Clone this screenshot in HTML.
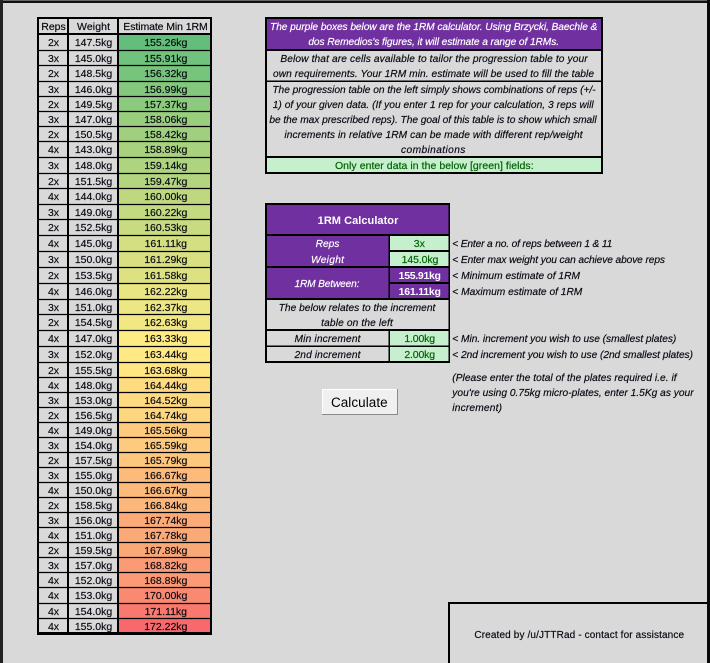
<!DOCTYPE html>
<html><head><meta charset="utf-8"><title>1RM Calculator</title>
<style>
html,body{margin:0;padding:0;background:#d9d9d9;width:710px;height:663px;overflow:hidden}
svg{display:block;position:absolute;left:0;top:0}
text{font-family:"Liberation Sans",sans-serif;font-size:10.5px;fill:#0a0a14;stroke:#0a0a14;stroke-width:.18px;text-anchor:middle;white-space:pre}
.i{font-style:italic;font-size:10.2px}
.s{text-anchor:start}
.w{fill:#fff;stroke:#fff}
.b{font-weight:bold;stroke-width:0}
.g{fill:#006100;stroke:#006100}
</style></head><body>
<svg width="710" height="663" viewBox="0 0 710 663" xmlns="http://www.w3.org/2000/svg">
<rect width="710" height="663" fill="#d9d9d9"/>
<rect x="0" y="0" width="710" height="3" fill="#111"/><rect x="0" y="0" width="710" height="1" fill="#666"/>
<rect x="0" y="0" width="3" height="663" fill="#222"/>
<rect x="707" y="0" width="3" height="663" fill="#0a0a0a"/>

<!-- Progression table -->
<rect x="37" y="17" width="175" height="618" fill="#000"/>
<rect x="39" y="19" width="28" height="14" fill="#d9d9d9"/><rect x="69" y="19" width="48" height="14" fill="#d9d9d9"/><rect x="119" y="19" width="91" height="14" fill="#d9d9d9"/>
<rect x="39" y="35" width="28" height="597" fill="#d9d9d9"/><rect x="69" y="35" width="48" height="597" fill="#d9d9d9"/>
<g>
<rect x="119" y="35" width="91" height="16" fill="#63BE7B"/><rect x="119" y="51" width="91" height="15" fill="#70C27C"/><rect x="119" y="66" width="91" height="16" fill="#77C47C"/><rect x="119" y="82" width="91" height="15" fill="#84C87D"/><rect x="119" y="97" width="91" height="15" fill="#8CCA7D"/><rect x="119" y="112" width="91" height="15" fill="#99CE7E"/><rect x="119" y="127" width="91" height="15" fill="#A0D07F"/><rect x="119" y="142" width="91" height="16" fill="#A9D27F"/><rect x="119" y="158" width="91" height="16" fill="#AED47F"/><rect x="119" y="174" width="91" height="15" fill="#B4D580"/><rect x="119" y="189" width="91" height="16" fill="#BFD880"/><rect x="119" y="205" width="91" height="15" fill="#C3DA81"/><rect x="119" y="220" width="91" height="16" fill="#C9DB81"/><rect x="119" y="236" width="91" height="16" fill="#D4DF82"/><rect x="119" y="252" width="91" height="16" fill="#D8E082"/><rect x="119" y="268" width="91" height="16" fill="#DDE182"/><rect x="119" y="284" width="91" height="16" fill="#EAE583"/><rect x="119" y="300" width="91" height="15" fill="#ECE683"/><rect x="119" y="315" width="91" height="16" fill="#F1E783"/><rect x="119" y="331" width="91" height="16" fill="#FFEB84"/><rect x="119" y="347" width="91" height="16" fill="#FFE984"/><rect x="119" y="363" width="91" height="15" fill="#FFE683"/><rect x="119" y="378" width="91" height="15" fill="#FEDB81"/><rect x="119" y="393" width="91" height="15" fill="#FEDA81"/><rect x="119" y="408" width="91" height="15" fill="#FED680"/><rect x="119" y="423" width="91" height="15" fill="#FDCA7E"/><rect x="119" y="438" width="91" height="15" fill="#FDCA7E"/><rect x="119" y="453" width="91" height="15" fill="#FDC77D"/><rect x="119" y="468" width="91" height="15" fill="#FCBA7B"/><rect x="119" y="483" width="91" height="15" fill="#FCBA7B"/><rect x="119" y="498" width="91" height="15" fill="#FCB87A"/><rect x="119" y="513" width="91" height="15" fill="#FCAB78"/><rect x="119" y="528" width="91" height="15" fill="#FBAA77"/><rect x="119" y="543" width="91" height="15" fill="#FBA877"/><rect x="119" y="558" width="91" height="15" fill="#FB9B75"/><rect x="119" y="573" width="91" height="15" fill="#FB9A74"/><rect x="119" y="588" width="91" height="16" fill="#FA8971"/><rect x="119" y="604" width="91" height="15" fill="#F9796E"/><rect x="119" y="619" width="91" height="13" fill="#F8696B"/>
</g>
<path stroke="#000" stroke-width="1.2" fill="none" d="M39 50.5H210M39 65.5H210M39 81.5H210M39 96.5H210M39 111.5H210M39 126.5H210M39 141.5H210M39 157.5H210M39 173.5H210M39 188.5H210M39 204.5H210M39 219.5H210M39 235.5H210M39 251.5H210M39 267.5H210M39 283.5H210M39 299.5H210M39 314.5H210M39 330.5H210M39 346.5H210M39 362.5H210M39 377.5H210M39 392.5H210M39 407.5H210M39 422.5H210M39 437.5H210M39 452.5H210M39 467.5H210M39 482.5H210M39 497.5H210M39 512.5H210M39 527.5H210M39 542.5H210M39 557.5H210M39 572.5H210M39 587.5H210M39 603.5H210M39 618.5H210"/>
<text x="53.5" y="30">Reps</text><text x="93.5" y="30" textLength="33">Weight</text><text x="165.5" y="30" textLength="84.4">Estimate Min 1RM</text>
<text x="53.5" y="46">2x</text><text x="93.5" y="46">147.5kg</text><text x="165.8" y="46">155.26kg</text>
<text x="53.5" y="62">3x</text><text x="93.5" y="62">145.0kg</text><text x="165.8" y="62">155.91kg</text>
<text x="53.5" y="77">2x</text><text x="93.5" y="77">148.5kg</text><text x="165.8" y="77">156.32kg</text>
<text x="53.5" y="93">3x</text><text x="93.5" y="93">146.0kg</text><text x="165.8" y="93">156.99kg</text>
<text x="53.5" y="108">2x</text><text x="93.5" y="108">149.5kg</text><text x="165.8" y="108">157.37kg</text>
<text x="53.5" y="123">3x</text><text x="93.5" y="123">147.0kg</text><text x="165.8" y="123">158.06kg</text>
<text x="53.5" y="138">2x</text><text x="93.5" y="138">150.5kg</text><text x="165.8" y="138">158.42kg</text>
<text x="53.5" y="153">4x</text><text x="93.5" y="153">143.0kg</text><text x="165.8" y="153">158.89kg</text>
<text x="53.5" y="169">3x</text><text x="93.5" y="169">148.0kg</text><text x="165.8" y="169">159.14kg</text>
<text x="53.5" y="185">2x</text><text x="93.5" y="185">151.5kg</text><text x="165.8" y="185">159.47kg</text>
<text x="53.5" y="200">4x</text><text x="93.5" y="200">144.0kg</text><text x="165.8" y="200">160.00kg</text>
<text x="53.5" y="216">3x</text><text x="93.5" y="216">149.0kg</text><text x="165.8" y="216">160.22kg</text>
<text x="53.5" y="231">2x</text><text x="93.5" y="231">152.5kg</text><text x="165.8" y="231">160.53kg</text>
<text x="53.5" y="247">4x</text><text x="93.5" y="247">145.0kg</text><text x="165.8" y="247">161.11kg</text>
<text x="53.5" y="263">3x</text><text x="93.5" y="263">150.0kg</text><text x="165.8" y="263">161.29kg</text>
<text x="53.5" y="279">2x</text><text x="93.5" y="279">153.5kg</text><text x="165.8" y="279">161.58kg</text>
<text x="53.5" y="295">4x</text><text x="93.5" y="295">146.0kg</text><text x="165.8" y="295">162.22kg</text>
<text x="53.5" y="311">3x</text><text x="93.5" y="311">151.0kg</text><text x="165.8" y="311">162.37kg</text>
<text x="53.5" y="326">2x</text><text x="93.5" y="326">154.5kg</text><text x="165.8" y="326">162.63kg</text>
<text x="53.5" y="342">4x</text><text x="93.5" y="342">147.0kg</text><text x="165.8" y="342">163.33kg</text>
<text x="53.5" y="358">3x</text><text x="93.5" y="358">152.0kg</text><text x="165.8" y="358">163.44kg</text>
<text x="53.5" y="374">2x</text><text x="93.5" y="374">155.5kg</text><text x="165.8" y="374">163.68kg</text>
<text x="53.5" y="389">4x</text><text x="93.5" y="389">148.0kg</text><text x="165.8" y="389">164.44kg</text>
<text x="53.5" y="404">3x</text><text x="93.5" y="404">153.0kg</text><text x="165.8" y="404">164.52kg</text>
<text x="53.5" y="419">2x</text><text x="93.5" y="419">156.5kg</text><text x="165.8" y="419">164.74kg</text>
<text x="53.5" y="434">4x</text><text x="93.5" y="434">149.0kg</text><text x="165.8" y="434">165.56kg</text>
<text x="53.5" y="449">3x</text><text x="93.5" y="449">154.0kg</text><text x="165.8" y="449">165.59kg</text>
<text x="53.5" y="464">2x</text><text x="93.5" y="464">157.5kg</text><text x="165.8" y="464">165.79kg</text>
<text x="53.5" y="479">3x</text><text x="93.5" y="479">155.0kg</text><text x="165.8" y="479">166.67kg</text>
<text x="53.5" y="494">4x</text><text x="93.5" y="494">150.0kg</text><text x="165.8" y="494">166.67kg</text>
<text x="53.5" y="509">2x</text><text x="93.5" y="509">158.5kg</text><text x="165.8" y="509">166.84kg</text>
<text x="53.5" y="524">3x</text><text x="93.5" y="524">156.0kg</text><text x="165.8" y="524">167.74kg</text>
<text x="53.5" y="539">4x</text><text x="93.5" y="539">151.0kg</text><text x="165.8" y="539">167.78kg</text>
<text x="53.5" y="554">2x</text><text x="93.5" y="554">159.5kg</text><text x="165.8" y="554">167.89kg</text>
<text x="53.5" y="569">3x</text><text x="93.5" y="569">157.0kg</text><text x="165.8" y="569">168.82kg</text>
<text x="53.5" y="584">4x</text><text x="93.5" y="584">152.0kg</text><text x="165.8" y="584">168.89kg</text>
<text x="53.5" y="599">4x</text><text x="93.5" y="599">153.0kg</text><text x="165.8" y="599">170.00kg</text>
<text x="53.5" y="615">4x</text><text x="93.5" y="615">154.0kg</text><text x="165.8" y="615">171.11kg</text>
<text x="53.5" y="630">4x</text><text x="93.5" y="630">155.0kg</text><text x="165.8" y="630">172.22kg</text>

<!-- Info box -->
<rect x="265" y="17" width="338" height="157" fill="#000"/>
<rect x="267" y="19" width="334" height="30" fill="#7030A0"/>
<rect x="267" y="51" width="334" height="29.5" fill="#d9d9d9"/>
<rect x="267" y="82" width="334" height="74" fill="#d9d9d9"/>
<rect x="267" y="158" width="334" height="14" fill="#C6EFCE"/>
<text class="i w" x="433.7" y="30" textLength="327.3">The purple boxes below are the 1RM calculator. Using Brzycki, Baechle &amp;</text>
<text class="i w" x="433.7" y="45" textLength="250.7">dos Remedios's figures, it will estimate a range of 1RMs.</text>
<text class="i" x="434" y="62" textLength="307.3">Below that are cells available to tailor the progression table to your</text>
<text class="i" x="433.5" y="77" textLength="321">own requirements. Your 1RM min. estimate will be used to fill the table</text>
<text class="i" x="434" y="93" textLength="323.3">The progression table on the left simply shows combinations of reps (+/-</text>
<text class="i" x="433.2" y="108" textLength="321">1) of your given data. (If you enter 1 rep for your calculation, 3 reps will</text>
<text class="i" x="433" y="123" textLength="327.3">be the max prescribed reps). The goal of this table is to show which small</text>
<text class="i" x="433.5" y="138" textLength="298.3">increments in relative 1RM can be made with different rep/weight</text>
<text class="i" x="433.2" y="153" textLength="64.3">combinations</text>
<text class="g" x="434.3" y="169" textLength="198.7">Only enter data in the below [green] fields:</text>

<!-- Calculator -->
<rect x="265" y="203" width="185" height="160" fill="#000"/>
<rect x="267" y="205" width="181.5" height="29" fill="#7030A0"/>
<rect x="267" y="236" width="121.5" height="30" fill="#7030A0"/>
<rect x="267" y="268" width="121.5" height="30" fill="#7030A0"/>
<rect x="390" y="236" width="58.5" height="14" fill="#C6EFCE"/>
<rect x="390" y="252" width="58.5" height="14" fill="#C6EFCE"/>
<rect x="390" y="268" width="58.5" height="14" fill="#7030A0"/>
<rect x="390" y="284" width="58.5" height="14" fill="#7030A0"/>
<rect x="267" y="300" width="181.5" height="29" fill="#d9d9d9"/>
<rect x="267" y="331" width="121.5" height="14.5" fill="#d9d9d9"/>
<rect x="267" y="347" width="121.5" height="14" fill="#d9d9d9"/>
<rect x="390" y="331" width="58.5" height="14.5" fill="#C6EFCE"/>
<rect x="390" y="347" width="58.5" height="14" fill="#C6EFCE"/>
<text class="b w" x="358" y="224" textLength="80.7" style="font-size:11px">1RM Calculator</text>
<text class="i w" x="327.5" y="247">Reps</text>
<text class="i w" x="327.5" y="263" textLength="33">Weight</text>
<text class="i w" x="327" y="287" textLength="65">1RM Between:</text>
<text class="g" x="419.3" y="247">3x</text>
<text class="g" x="420" y="263" textLength="36.7">145.0kg</text>
<text class="b w" x="419.8" y="279" textLength="42.3">155.91kg</text>
<text class="b w" x="419.8" y="295" textLength="42.3">161.11kg</text>
<text class="i" x="357" y="311" textLength="156.7">The below relates to the increment</text>
<text class="i" x="357" y="326" textLength="71.7">table on the left</text>
<text class="i" x="327.5" y="342" textLength="66">Min increment</text>
<text class="i" x="327.5" y="358" textLength="66">2nd increment</text>
<text class="g" x="419.7" y="342" textLength="30.7">1.00kg</text>
<text class="g" x="419.7" y="358" textLength="30.7">2.00kg</text>

<!-- Side notes -->
<text class="i s" x="452.3" y="247" textLength="160">&lt; Enter a no. of reps between 1 &amp; 11</text>
<text class="i s" x="452.3" y="263" textLength="212.7">&lt; Enter max weight you can achieve above reps</text>
<text class="i s" x="452.3" y="279" textLength="127.7">&lt; Minimum estimate of 1RM</text>
<text class="i s" x="452.3" y="295" textLength="130">&lt; Maximum estimate of 1RM</text>
<text class="i s" x="452.3" y="342" textLength="224">&lt; Min. increment you wish to use (smallest plates)</text>
<text class="i s" x="452.3" y="358" textLength="240.7">&lt; 2nd increment you wish to use (2nd smallest plates)</text>
<text class="i s" x="452.3" y="381" textLength="224.3">(Please enter the total of the plates required i.e. if</text>
<text class="i s" x="452.3" y="396" textLength="241.3">you're using 0.75kg micro-plates, enter 1.5Kg as your</text>
<text class="i s" x="452.3" y="411" textLength="49.7">increment)</text>

<!-- Button -->
<rect x="322" y="389" width="76" height="26" fill="#8a8a8a"/>
<rect x="322" y="389" width="75" height="25" fill="#fff"/>
<rect x="323" y="390" width="74" height="24" fill="#f0f0f0"/>
<text x="359.3" y="407" textLength="56.7" style="font-size:13.5px;fill:#000;stroke-width:0">Calculate</text>

<!-- Footer -->
<rect x="448" y="602" width="259" height="2" fill="#000"/>
<rect x="448" y="602" width="2" height="61" fill="#000"/>
<text x="579.2" y="638" textLength="209.7" style="font-size:10px">Created by /u/JTTRad - contact for assistance</text>
</svg>
</body></html>
